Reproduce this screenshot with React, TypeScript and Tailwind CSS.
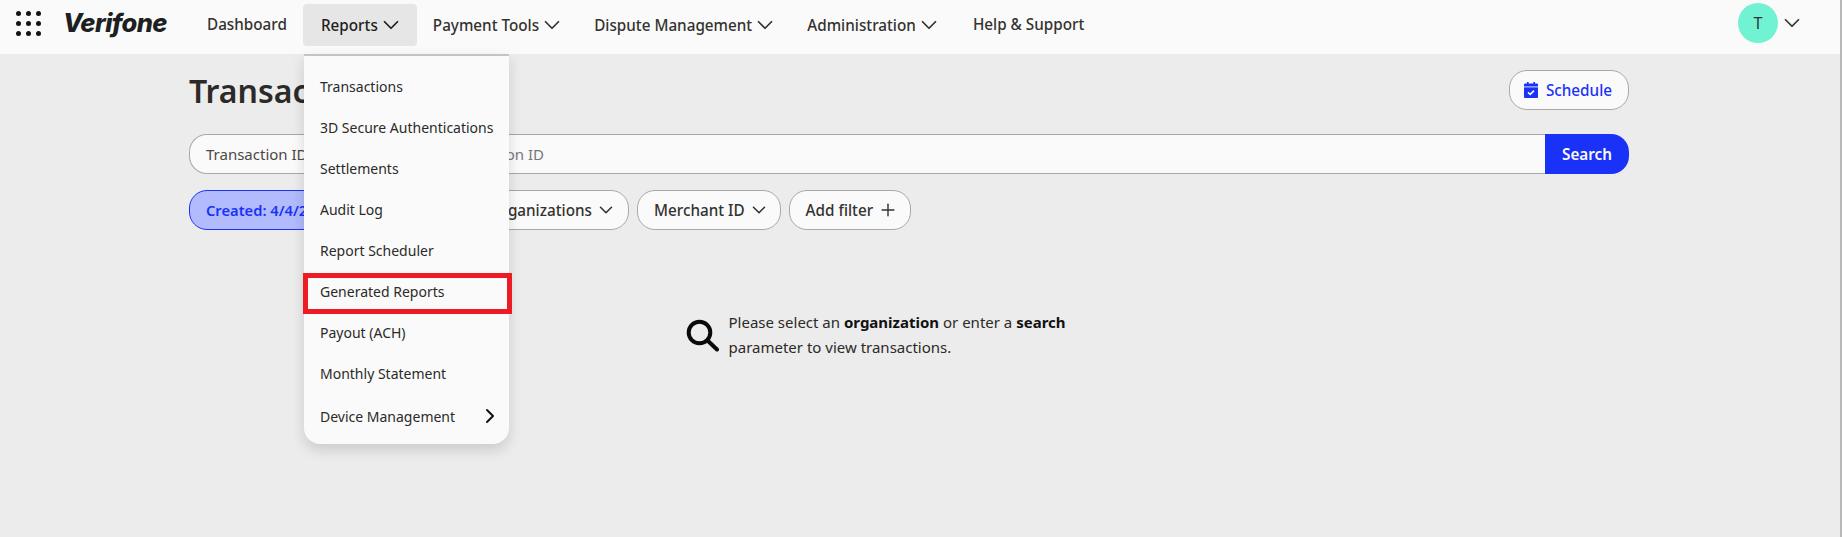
import { ChevronDown, ChevronRight, Plus } from "lucide-react";

const FONT = "font-['Noto_Sans',sans-serif]";

const NAV_ITEMS = [
  { label: "Reports", open: true },
  { label: "Payment Tools" },
  { label: "Dispute Management" },
  { label: "Administration" },
];

const MENU_ITEMS = [
  "Transactions",
  "3D Secure Authentications",
  "Settlements",
  "Audit Log",
  "Report Scheduler",
  "Generated Reports",
  "Payout (ACH)",
  "Monthly Statement",
];

function AppGrid() {
  return (
    <div className="mb-[8px] grid w-[25px] grid-cols-3 gap-x-[5px] gap-y-[5px]">
      {Array.from({ length: 9 }).map((_, index) => (
        <span key={index} className="h-[5px] w-[5px] rounded-full bg-[#141414]" />
      ))}
    </div>
  );
}

function CalendarIcon() {
  return (
    <svg width="14" height="16" viewBox="0 0 14 16" aria-hidden="true">
      <rect x="3" y="0" width="1.6" height="3" fill="#1a32f8" />
      <rect x="9.4" y="0" width="1.6" height="3" fill="#1a32f8" />
      <path d="M1 1.5h12a1 1 0 0 1 1 1V4H0V2.5a1 1 0 0 1 1-1Z" fill="#1a32f8" />
      <rect x="0" y="4" width="14" height="1.6" fill="#8c98fb" />
      <path d="M0 5.6h14V15a1 1 0 0 1-1 1H1a1 1 0 0 1-1-1Z" fill="#1a32f8" />
      <path d="M4 10.4 6.2 12.4 10 8.6" fill="none" stroke="#fafafa" strokeWidth="1.5" />
    </svg>
  );
}

function SearchIcon() {
  return (
    <svg width="33" height="33" viewBox="0 0 33 33" fill="none" aria-hidden="true">
      <circle cx="13.5" cy="13.5" r="10.8" stroke="#0a0a0a" strokeWidth="4" />
      <path d="M21.5 21.5 31 30.5" stroke="#0a0a0a" strokeWidth="4" strokeLinecap="round" />
    </svg>
  );
}

function Header() {
  return (
    <header className="flex h-[54px] items-center bg-[#fafafa] pr-[35px] pl-[16px]">
      <AppGrid />
      <span className="mb-[8px] ml-[22px] w-[127px] font-['Inter',sans-serif] text-[25.5px] font-extrabold tracking-[-0.6px] text-[#1d1f22] italic">
        Verifone
      </span>
      <nav className="mb-[4px] flex items-center text-[15.25px] font-medium text-[#33322f]">
        <a className="mb-[1px] pr-[16px] pl-[17px]">Dashboard</a>
        {NAV_ITEMS.map((item) => (
          <a
            key={item.label}
            className={
              item.open
                ? "flex h-[42px] items-center rounded bg-[#e6e6e6] pr-[13px] pl-[18px] text-[#1f1e1c]"
                : "flex h-[42px] items-center pr-[13px] pl-[16px]"
            }
          >
            {item.label}
            <ChevronDown size={26} strokeWidth={1.6} />
          </a>
        ))}
        <a className="mb-[1px] pr-[17px] pl-[18px]">Help &amp; Support</a>
      </nav>
      <div className="mb-[8px] ml-auto flex items-center gap-[1px]">
        <div className="flex h-[40px] w-[40px] items-center justify-center rounded-full bg-[#70f2d3] text-[16px] text-[#333]">
          T
        </div>
        <ChevronDown size={26} strokeWidth={1.6} className="text-[#333]" />
      </div>
    </header>
  );
}

function ReportsMenu() {
  return (
    <div className="absolute top-[54px] left-[304px] z-10 w-[205px] rounded-b-[16px] border-t-2 border-[#c4c4c4] bg-[#fafafa] pt-[10px] pb-[6px] text-[14px] whitespace-nowrap text-[#2b2a28] shadow-[0_6px_14px_rgba(0,0,0,0.14)]">
      {MENU_ITEMS.map((item) => (
        <a key={item} className="relative flex h-[41px] items-center px-[16px]">
          {item}
          {item === "Generated Reports" && (
            <span className="absolute top-[2px] right-[-3px] bottom-[-2px] left-[-1px] border-[5px] border-[#ed1c24]" />
          )}
        </a>
      ))}
      <a className="flex h-[44px] items-center justify-between pr-[7px] pl-[16px]">
        Device Management
        <ChevronRight size={24} strokeWidth={2} className="text-[#111]" />
      </a>
    </div>
  );
}

function Pill({
  children,
  className = "bg-[#fafafa] border-[#a8a8a8]",
  layout = "",
}: {
  children: React.ReactNode;
  className?: string;
  layout?: string;
}) {
  return (
    <button
      className={`flex h-[40px] items-center rounded-[18px] border text-[15.25px] font-medium text-[#33322f] ${className} ${layout}`}
    >
      {children}
    </button>
  );
}

export default function App() {
  return (
    <div className={`relative h-[537px] overflow-hidden border-r-2 border-[#b8b8b8] bg-[#ececec] ${FONT}`}>
      <Header />
      <ReportsMenu />
      <main className="flex flex-col pr-[211px] pl-[189px]">
        <div className="mt-[16px] flex items-center justify-between">
          <h1 className="h-[40px] text-[32px] leading-[42px] font-semibold text-[#2b2a28]">Transactions</h1>
          <Pill layout="gap-[8px] pr-[16px] pl-[14px]">
            <CalendarIcon />
            <span className="text-[#1a32f8]">Schedule</span>
          </Pill>
        </div>

        <div className="mt-[24px] flex h-[40px]">
          <div className="flex flex-1 items-center rounded-l-[18px] border border-r-0 border-[#a8a8a8] bg-[#fafafa] text-[15px]">
            <span className="w-[213px] pl-[16px] text-[#4a4947]">Transaction ID</span>
            <span className="text-[#77767a]">Enter transaction ID</span>
          </div>
          <button className="w-[84px] rounded-r-[18px] bg-[#1a32f8] text-[15.25px] font-semibold text-[#fafafa]">
            Search
          </button>
        </div>

        <div className="mt-[16px] flex gap-[8px]">
          <Pill className="border-[#1a32f8] bg-[#b1bbfd]" layout="w-[172px] justify-start pl-[16px] font-semibold">
            <span className="text-[14.7px] whitespace-nowrap text-[#1a32f8]">Created: 4/4/2025</span>
          </Pill>
          <Pill layout="w-[260px] justify-end gap-[3px] pr-[11px]">
            All organizations
            <ChevronDown size={22} strokeWidth={1.7} />
          </Pill>
          <Pill layout="gap-[3px] pr-[10px] pl-[16px]">
            Merchant ID
            <ChevronDown size={22} strokeWidth={1.7} />
          </Pill>
          <Pill layout="gap-[5px] pr-[12px] pl-[16px]">
            Add filter
            <Plus size={20} strokeWidth={1.7} />
          </Pill>
        </div>

        <div className="mt-[80px] flex items-center justify-center gap-[10px]">
          <SearchIcon />
          <p className="w-[404px] text-[15px] leading-[25px] text-[#2b2a28]">
            Please select an <strong className="font-bold text-[#111]">organization</strong> or enter a{" "}
            <strong className="font-bold text-[#111]">search</strong> parameter to view transactions.
          </p>
        </div>
      </main>
    </div>
  );
}
